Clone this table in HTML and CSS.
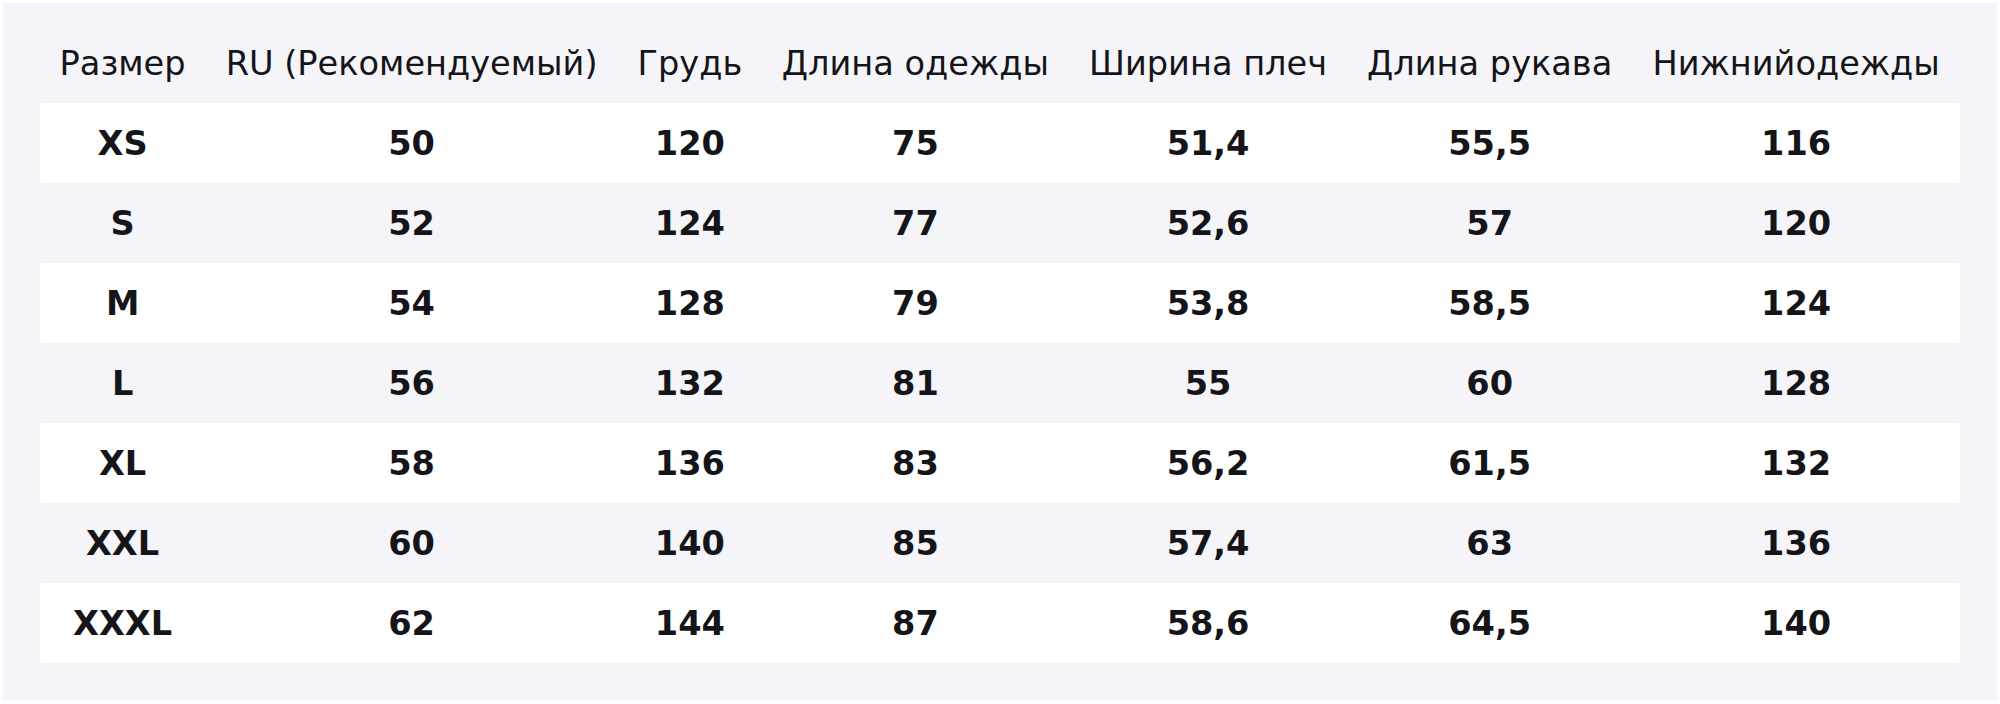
FILE: index.html
```html
<!DOCTYPE html>
<html lang="ru">
<head>
<meta charset="utf-8">
<title>Таблица размеров</title>
<link rel="stylesheet" href="styles.css">
</head>
<body>
<div class="panel">
<table class="sizes">
<thead>
<tr><th>Размер</th><th>RU (Рекомендуемый)</th><th>Грудь</th><th>Длина одежды</th><th>Ширина плеч</th><th>Длина рукава</th><th>Нижнийодежды</th></tr>
</thead>
<tbody>
<tr><td>XS</td><td>50</td><td>120</td><td>75</td><td>51,4</td><td>55,5</td><td>116</td></tr>
<tr><td>S</td><td>52</td><td>124</td><td>77</td><td>52,6</td><td>57</td><td>120</td></tr>
<tr><td>M</td><td>54</td><td>128</td><td>79</td><td>53,8</td><td>58,5</td><td>124</td></tr>
<tr><td>L</td><td>56</td><td>132</td><td>81</td><td>55</td><td>60</td><td>128</td></tr>
<tr><td>XL</td><td>58</td><td>136</td><td>83</td><td>56,2</td><td>61,5</td><td>132</td></tr>
<tr><td>XXL</td><td>60</td><td>140</td><td>85</td><td>57,4</td><td>63</td><td>136</td></tr>
<tr><td>XXXL</td><td>62</td><td>144</td><td>87</td><td>58,6</td><td>64,5</td><td>140</td></tr>
</tbody>
</table>
</div>
</body>
</html>
```
FILE: styles.css
```css
html, body {
  margin: 0;
  padding: 0;
  background: #ffffff;
}
body {
  padding: 3px;
  font-family: "DejaVu Sans", "Liberation Sans", sans-serif;
  color: #151519;
}
.panel {
  background: #f4f4f9;
  padding: 37px;
  height: 697px;
  box-sizing: border-box;
}
.sizes {
  width: 100%;
  border-collapse: collapse;
  border-spacing: 0;
}
.sizes th {
  font-weight: normal;
  font-size: 33.6px;
  line-height: 38px;
  height: 63px;
  box-sizing: border-box;
  padding: 5px 19px 20px;
  white-space: nowrap;
  text-align: center;
  vertical-align: top;
}
.sizes td {
  font-weight: bold;
  font-size: 33.6px;
  line-height: 38px;
  height: 80px;
  box-sizing: border-box;
  padding: 1px 19px 0;
  text-align: center;
  vertical-align: middle;
  white-space: nowrap;
}
.sizes tbody tr:nth-child(odd) {
  background: #ffffff;
}
.sizes tbody tr:nth-child(even) {
  background: transparent;
}
```
